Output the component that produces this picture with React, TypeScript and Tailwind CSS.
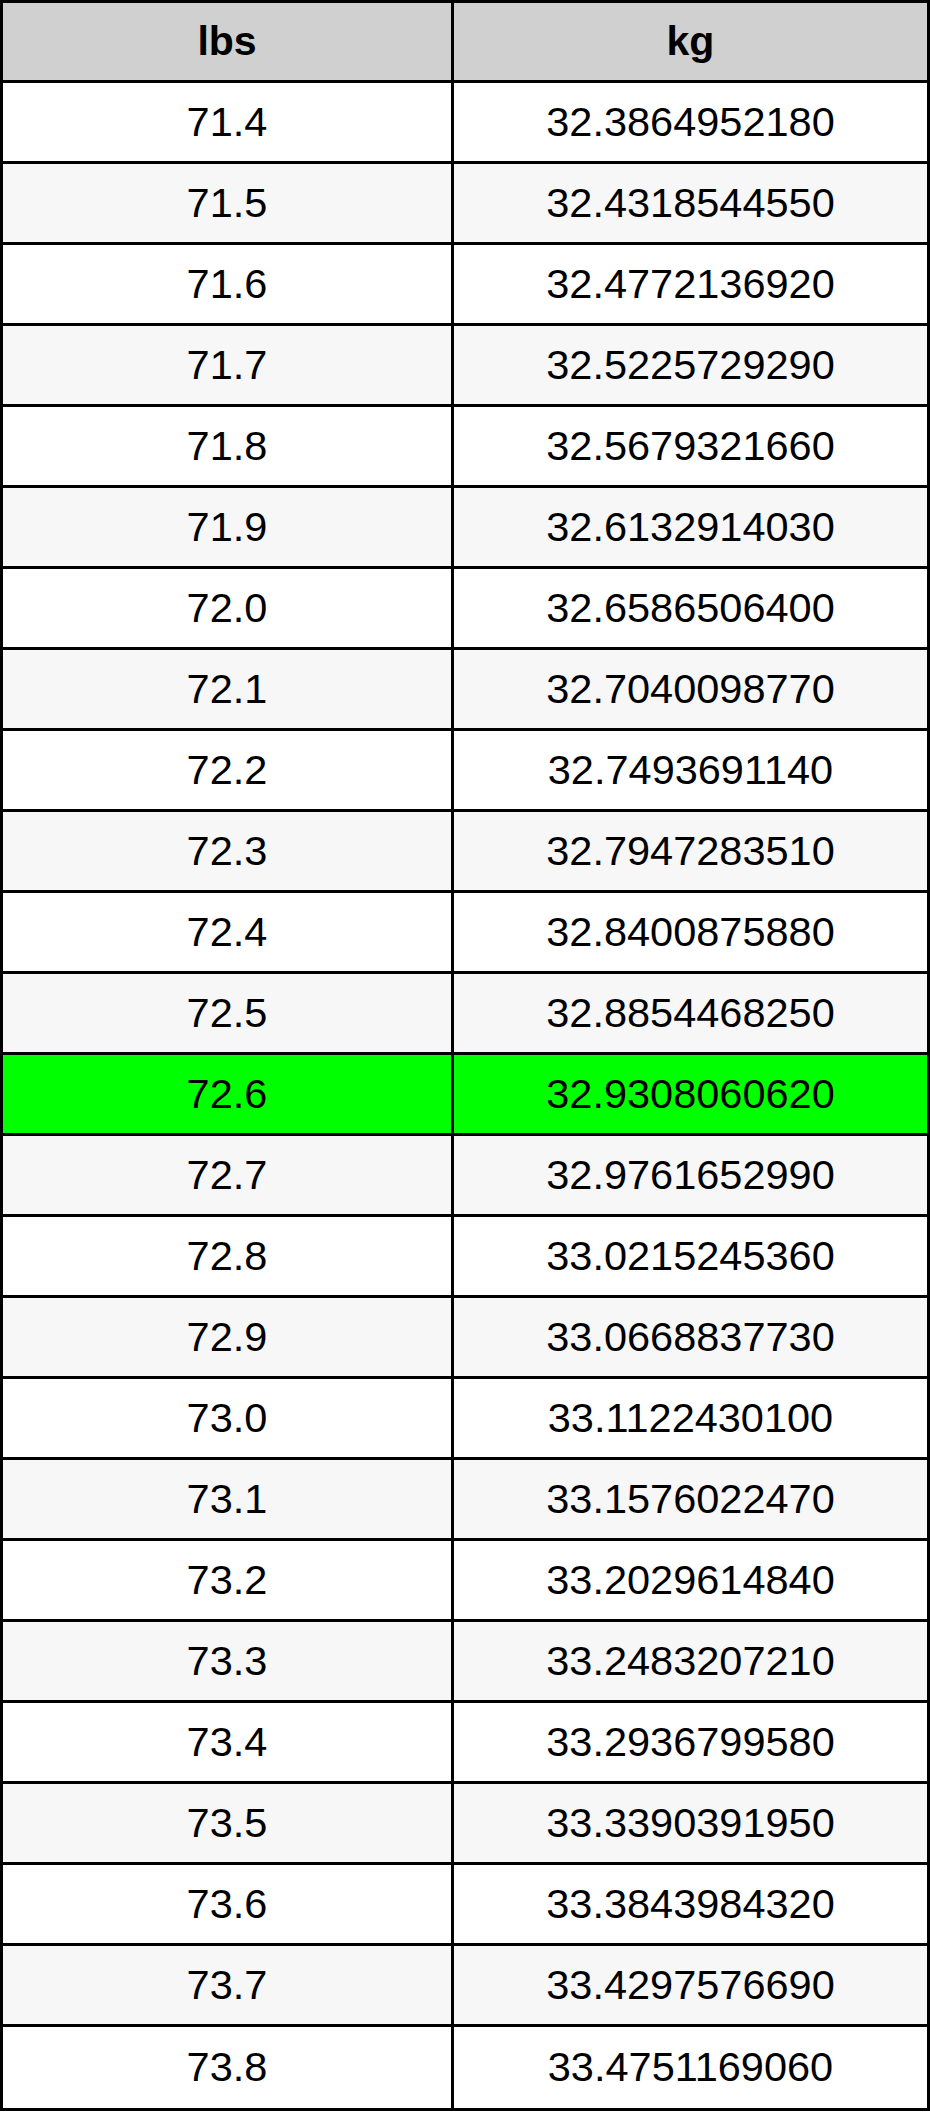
import React from "react";

const rows: [string, string][] = [
  ["71.4", "32.3864952180"],
  ["71.5", "32.4318544550"],
  ["71.6", "32.4772136920"],
  ["71.7", "32.5225729290"],
  ["71.8", "32.5679321660"],
  ["71.9", "32.6132914030"],
  ["72.0", "32.6586506400"],
  ["72.1", "32.7040098770"],
  ["72.2", "32.7493691140"],
  ["72.3", "32.7947283510"],
  ["72.4", "32.8400875880"],
  ["72.5", "32.8854468250"],
  ["72.6", "32.9308060620"],
  ["72.7", "32.9761652990"],
  ["72.8", "33.0215245360"],
  ["72.9", "33.0668837730"],
  ["73.0", "33.1122430100"],
  ["73.1", "33.1576022470"],
  ["73.2", "33.2029614840"],
  ["73.3", "33.2483207210"],
  ["73.4", "33.2936799580"],
  ["73.5", "33.3390391950"],
  ["73.6", "33.3843984320"],
  ["73.7", "33.4297576690"],
  ["73.8", "33.4751169060"],
];

export default function App() {
  return (
    <div className="w-[930px] bg-white font-['Liberation_Sans',Arial,sans-serif] text-black">
      <div className="border-[3px] border-black">
        <div className="flex h-[80px] border-b-[3px] border-black bg-[#d0d0d0] text-[41px] font-bold">
          <div className="flex w-[451px] items-center justify-center border-r-[3px] border-black">lbs</div>
          <div className="flex flex-1 items-center justify-center">kg</div>
        </div>
        {rows.map(([a, b], i) => {
          const hl = a === "72.6";
          const last = i === rows.length - 1;
          const bg = hl ? "bg-[#00ff00]" : i % 2 === 1 ? "bg-[#f7f7f7]" : "bg-white";
          return (
            <div
              key={a}
              className={`flex h-[81px] text-[41.5px] ${last ? "h-[78px]" : "border-b-[3px] border-black"} ${bg}`}
            >
              <div className="flex w-[451px] items-center justify-center border-r-[3px] border-black">{a}</div>
              <div className="flex flex-1 items-center justify-center">{b}</div>
            </div>
          );
        })}
      </div>
    </div>
  );
}
